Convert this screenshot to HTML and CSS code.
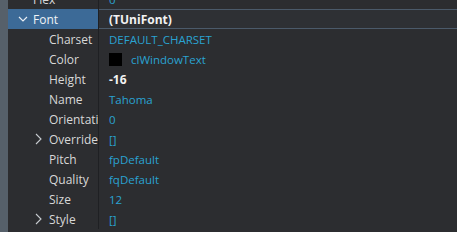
FILE: index.html
```html
<!DOCTYPE html>
<html lang="en">
<head>
  <meta charset="UTF-8">
  <title>Object Inspector</title>
  <link rel="stylesheet" href="styles.css">
</head>
<body>
  <div class="inspector">
    <div class="gutter"></div>
    <div class="props">
      <div class="row top">
        <div class="name lvl1">Flex</div>
        <div class="value">0</div>
      </div>
      <div class="row selected">
        <div class="name lvl1">
          <svg class="chev" width="10" height="10" viewBox="0 0 10 10"><path d="M1 3 L5 7 L9 3" fill="none" stroke="#e8eef4" stroke-width="1.2"/></svg>
          Font
        </div>
        <div class="value bold">(TUniFont)</div>
      </div>
      <div class="row">
        <div class="name lvl2">Charset</div>
        <div class="value">DEFAULT_CHARSET</div>
      </div>
      <div class="row">
        <div class="name lvl2">Color</div>
        <div class="value"><span class="swatch"></span>clWindowText</div>
      </div>
      <div class="row">
        <div class="name lvl2">Height</div>
        <div class="value bold">-16</div>
      </div>
      <div class="row">
        <div class="name lvl2">Name</div>
        <div class="value">Tahoma</div>
      </div>
      <div class="row">
        <div class="name lvl2">Orientation</div>
        <div class="value">0</div>
      </div>
      <div class="row">
        <div class="name lvl2">
          <svg class="chev sub" width="8" height="12" viewBox="0 0 8 12"><path d="M2 1 L7 6 L2 11" fill="none" stroke="#c8ccd0" stroke-width="1.1"/></svg>
          OverrideDefaults
        </div>
        <div class="value">[]</div>
      </div>
      <div class="row">
        <div class="name lvl2">Pitch</div>
        <div class="value">fpDefault</div>
      </div>
      <div class="row">
        <div class="name lvl2">Quality</div>
        <div class="value">fqDefault</div>
      </div>
      <div class="row">
        <div class="name lvl2">Size</div>
        <div class="value">12</div>
      </div>
      <div class="row">
        <div class="name lvl2">
          <svg class="chev sub" width="8" height="12" viewBox="0 0 8 12"><path d="M2 1 L7 6 L2 11" fill="none" stroke="#c8ccd0" stroke-width="1.1"/></svg>
          Style
        </div>
        <div class="value">[]</div>
      </div>
    </div>
  </div>
</body>
</html>
```

FILE: styles.css
```css
/* dark object inspector */
html, body {
  margin: 0;
  height: 100%;
  background: #2c2d30;
  overflow: hidden;
}

body {
  font-family: 'Open Sans', 'Noto Sans', sans-serif;
  font-size: 11.5px;
  color: #d8d8d8;
}

.inspector {
  display: flex;
  height: 100%;
}

.gutter {
  width: 8px;
  flex: none;
  background: #56606a;
}

.props {
  flex: 1;
  margin-top: -11px;
}

.row {
  display: grid;
  grid-template-columns: 90px 1px 1fr;
  height: 20px;
}

.row::before {
  content: '';
  grid-column: 2;
  grid-row: 1;
  background: #1f2023;
}

.name {
  grid-column: 1;
  grid-row: 1;
  display: flex;
  align-items: center;
  white-space: nowrap;
  overflow: hidden;
  position: relative;
  font-size: 12px;
}

.lvl1 { padding-left: 25px; }
.lvl2 { padding-left: 41px; }

.chev {
  position: absolute;
  left: 10px;
  top: 5px;
}

.chev.sub {
  left: 26px;
  top: 4px;
}

.value {
  grid-column: 3;
  grid-row: 1;
  display: flex;
  align-items: center;
  padding-left: 10px;
  color: #2aa3d2;
  white-space: nowrap;
}

.value.bold {
  color: #f2f2f2;
  font-weight: bold;
  font-size: 12px;
}

.swatch {
  width: 13px;
  height: 13px;
  background: #000;
  margin-right: 9px;
}

.selected .name {
  background: #3c6a97;
  color: #eef2f6;
}

.selected .value {
  background: #2e3034;
  border-top: 1px solid #4b5a6a;
  border-bottom: 1px solid #4b5a6a;
}
```
